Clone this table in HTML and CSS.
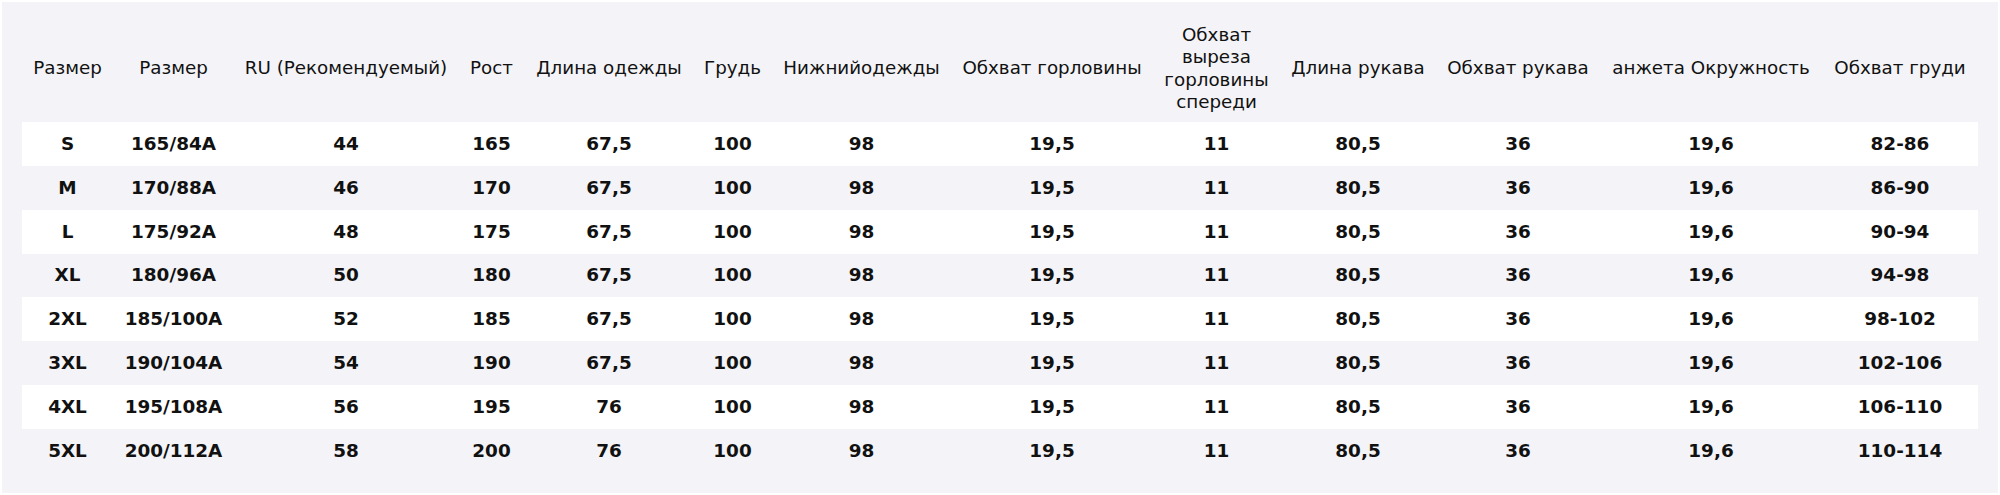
FILE: index.html
```html
<!DOCTYPE html>
<html lang="ru">
<head>
<meta charset="utf-8">
<title>Таблица размеров</title>
<link rel="stylesheet" href="styles.css">
</head>
<body>
<div class="sheet">
  <table class="sizes">
    <colgroup>
      <col class="w1"><col class="w2"><col class="w3"><col class="w4"><col class="w5"><col class="w6"><col class="w7"><col class="w8"><col class="w9"><col class="w10"><col class="w11"><col class="w12"><col class="w13">
    </colgroup>
    <thead>
      <tr>
        <th>Размер</th>
        <th>Размер</th>
        <th>RU (Рекомендуемый)</th>
        <th>Рост</th>
        <th>Длина одежды</th>
        <th>Грудь</th>
        <th>Нижнийодежды</th>
        <th>Обхват горловины</th>
        <th class="wrap">Обхват выреза горловины спереди</th>
        <th>Длина рукава</th>
        <th>Обхват рукава</th>
        <th>анжета Окружность</th>
        <th>Обхват груди</th>
      </tr>
    </thead>
    <tbody>
      <tr><td>S</td><td>165/84A</td><td>44</td><td>165</td><td>67,5</td><td>100</td><td>98</td><td>19,5</td><td>11</td><td>80,5</td><td>36</td><td>19,6</td><td>82-86</td></tr>
      <tr><td>M</td><td>170/88A</td><td>46</td><td>170</td><td>67,5</td><td>100</td><td>98</td><td>19,5</td><td>11</td><td>80,5</td><td>36</td><td>19,6</td><td>86-90</td></tr>
      <tr><td>L</td><td>175/92A</td><td>48</td><td>175</td><td>67,5</td><td>100</td><td>98</td><td>19,5</td><td>11</td><td>80,5</td><td>36</td><td>19,6</td><td>90-94</td></tr>
      <tr><td>XL</td><td>180/96A</td><td>50</td><td>180</td><td>67,5</td><td>100</td><td>98</td><td>19,5</td><td>11</td><td>80,5</td><td>36</td><td>19,6</td><td>94-98</td></tr>
      <tr><td>2XL</td><td>185/100A</td><td>52</td><td>185</td><td>67,5</td><td>100</td><td>98</td><td>19,5</td><td>11</td><td>80,5</td><td>36</td><td>19,6</td><td>98-102</td></tr>
      <tr><td>3XL</td><td>190/104A</td><td>54</td><td>190</td><td>67,5</td><td>100</td><td>98</td><td>19,5</td><td>11</td><td>80,5</td><td>36</td><td>19,6</td><td>102-106</td></tr>
      <tr><td>4XL</td><td>195/108A</td><td>56</td><td>195</td><td>76</td><td>100</td><td>98</td><td>19,5</td><td>11</td><td>80,5</td><td>36</td><td>19,6</td><td>106-110</td></tr>
      <tr><td>5XL</td><td>200/112A</td><td>58</td><td>200</td><td>76</td><td>100</td><td>98</td><td>19,5</td><td>11</td><td>80,5</td><td>36</td><td>19,6</td><td>110-114</td></tr>
    </tbody>
  </table>
</div>
</body>
</html>
```

FILE: styles.css
```css
html, body {
  margin: 0;
  padding: 0;
  background: #ffffff;
}

body {
  font-family: "DejaVu Sans", "Liberation Sans", sans-serif;
  color: #111111;
  font-size: 18.3px;
}

.sheet {
  margin: 2px;
  height: 491px;
  box-sizing: border-box;
  padding: 0 20px 20px;
  background: #f4f4f8;
}

.sizes {
  width: 100%;
  border-collapse: collapse;
  table-layout: fixed;
}

.w1 { width: 91px; }
.w2 { width: 121px; }
.w3 { width: 224px; }
.w4 { width: 67px; }
.w5 { width: 168px; }
.w6 { width: 79px; }
.w7 { width: 179px; }
.w8 { width: 202px; }
.w9 { width: 127px; }
.w10 { width: 156px; }
.w11 { width: 164px; }
.w12 { width: 222px; }
.w13 { width: 156px; }

.sizes th {
  font-weight: normal;
  text-align: center;
  vertical-align: middle;
  line-height: 22.3px;
  padding: 22px 2px 9px;
  white-space: nowrap;
}

.sizes th.wrap {
  white-space: normal;
  padding-left: 8px;
  padding-right: 8px;
}

.sizes td {
  font-size: 18.4px;
  font-weight: bold;
  text-align: center;
  vertical-align: middle;
  height: 43.8px;
  padding: 0 2px;
  line-height: 22px;
  white-space: nowrap;
}

.sizes tbody tr:nth-child(odd) {
  background: #ffffff;
}
```
